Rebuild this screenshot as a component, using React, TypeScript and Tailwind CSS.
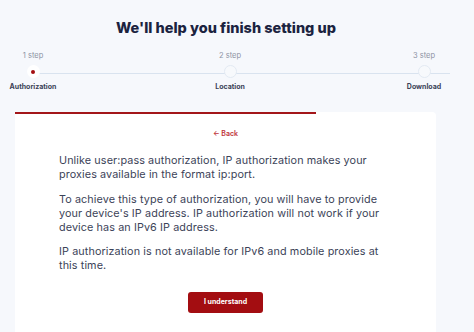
import React from "react";

export default function App() {
  const font = { fontFamily: "Inter, 'Noto Sans', sans-serif" };
  return (
    <div className="w-[474px] h-[332px] overflow-hidden bg-[#f6f8fc]" style={font}>
      <h1 className="w-[452px] pt-[18px] text-center text-[14.5px] leading-[20px] font-extrabold text-[#1b2340]">
        We'll help you finish setting up
      </h1>
      <div className="relative mt-[13px] mx-[12px] h-[46px]">
        <div className="absolute left-[27px] right-[12px] top-[22px] h-[1px] bg-[#d9e3ef]" />
        <div className="absolute left-[-2px] top-0 w-[46px] flex flex-col items-center">
          <span className="text-[7.5px] leading-[10px] text-[#8d93a3]">1 step</span>
          <span className="mt-[4px] w-[13px] h-[13px] rounded-full bg-white flex items-center justify-center">
            <span className="w-[4px] h-[4px] rounded-full bg-[#a30d11]" />
          </span>
          <span className="mt-[4px] text-[7px] leading-[9px] font-bold text-[#3a4156]">Authorization</span>
        </div>
        <div className="absolute left-[195px] top-0 w-[46px] flex flex-col items-center">
          <span className="text-[7.5px] leading-[10px] text-[#8d93a3]">2 step</span>
          <span className="mt-[4px] w-[13px] h-[13px] rounded-full bg-[#f7f9fc] border border-[#e3eaf3]" />
          <span className="mt-[4px] text-[7px] leading-[9px] font-bold text-[#3a4156]">Location</span>
        </div>
        <div className="absolute left-[389px] top-0 w-[46px] flex flex-col items-center">
          <span className="text-[7.5px] leading-[10px] text-[#8d93a3]">3 step</span>
          <span className="mt-[4px] w-[13px] h-[13px] rounded-full bg-[#f7f9fc] border border-[#e3eaf3]" />
          <span className="mt-[4px] text-[7px] leading-[9px] font-bold text-[#3a4156]">Download</span>
        </div>
      </div>
      <div className="mt-[15px] ml-[15px] w-[421px] bg-white rounded-tr-[4px] h-[240px]">
        <div className="h-[2px] w-[301px] bg-[#a3161a]" />
        <div className="pt-[15px] flex justify-center">
          <span className="text-[7px] leading-[10px] font-semibold text-[#c0333a]">← Back</span>
        </div>
        <div className="mt-[15px] pl-[44px] pr-[40px] text-[10.8px] leading-[14px] text-[#3c4358] tracking-[0.1px]">
          <p>Unlike user:pass authorization, IP authorization makes your proxies available in the format ip:port.</p>
          <p className="mt-[11px]">To achieve this type of authorization, you will have to provide your device's IP address. IP authorization will not work if your device has an IPv6 IP address.</p>
          <p className="mt-[10px]">IP authorization is not available for IPv6 and mobile proxies at this time.</p>
        </div>
        <div className="mt-[19px] flex justify-center">
          <button className="w-[75px] h-[21px] rounded-[3px] bg-[#a30d11] text-white text-[7px] font-bold">I understand</button>
        </div>
      </div>
    </div>
  );
}
